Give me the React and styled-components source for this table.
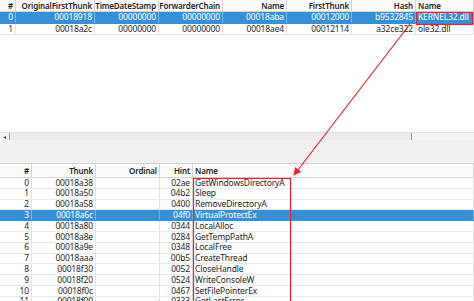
import React from 'react';
import styled, { createGlobalStyle } from 'styled-components';

const GlobalStyle = createGlobalStyle`
  html, body {
    margin: 0;
    padding: 0;
    background: #ffffff;
  }
  body {
    font-family: 'Noto Sans', 'Open Sans', sans-serif;
  }
`;

const SELECT_BLUE = '#3790d6';
const ANNOT_RED = '#e3232f';

const Frame = styled.div`
  position: relative;
  width: 474px;
  height: 301px;
  overflow: hidden;
  background: #ffffff;
  display: flex;
  flex-direction: column;
  font-size: 8.5px;
  letter-spacing: -0.15px;
  color: #262626;
`;

const TopPane = styled.div`
  height: 132px;
  background: #ffffff;
  display: flex;
  flex-direction: column;
`;

const Row = styled.div`
  display: grid;
  grid-template-columns: ${(p) => p.cols};
  height: ${(p) => p.h}px;
  flex: 0 0 auto;
  background: ${(p) => (p.selected ? SELECT_BLUE : '#ffffff')};
  color: ${(p) => (p.selected ? '#ffffff' : '#262626')};
  border-bottom: 1px solid ${(p) => (p.selected ? SELECT_BLUE : '#e9e9e9')};
  box-sizing: border-box;
`;

const HeadRow = styled(Row)`
  background: #fbfbfb;
  color: #1e1e1e;
  font-size: 8px;
  font-weight: 600;
  border-bottom: 1px solid #d6d6d6;
`;

const Cell = styled.div`
  display: flex;
  align-items: center;
  justify-content: ${(p) => (p.left ? 'flex-start' : 'flex-end')};
  padding: 0 2px;
  white-space: nowrap;
  overflow: hidden;
  border-right: 1px solid ${(p) => (p.selected ? 'rgba(255,255,255,0.35)' : '#e2e2e2')};
  box-sizing: border-box;
  line-height: 1;
`;

const HeadCell = styled(Cell)`
  border-right: 1px solid #d2d2d2;
`;

const HScroll = styled.div`
  height: 8px;
  display: flex;
  background: #f4f4f4;
  border-top: 1px solid #e2e2e2;
  box-sizing: border-box;
`;

const ScrollArrow = styled.div`
  width: 9px;
  display: flex;
  align-items: center;
  justify-content: center;
  font-size: 6px;
  color: #444;
`;

const ScrollThumb = styled.div`
  width: 403px;
  background: #ececec;
  border-left: 1px solid #9a9a9a;
  border-right: 1px solid #9a9a9a;
  box-sizing: border-box;
`;

const Splitter = styled.div`
  height: 24px;
  background: #f0f0f0;
  border-bottom: 1px solid #cfcfcf;
  box-sizing: border-box;
`;

const BottomPane = styled.div`
  flex: 1;
  display: flex;
  flex-direction: column;
  overflow: hidden;
`;

const Overlay = styled.svg`
  position: absolute;
  left: 0;
  top: 0;
  pointer-events: none;
`;

const topCols = '16px 79px 64px 64px 64px 65px 64px 58px';
const topHead = ['#', 'OriginalFirstThunk', 'TimeDateStamp', 'ForwarderChain', 'Name', 'FirstThunk', 'Hash', 'Name'];
const topRows = [
  ['0', '00018918', '00000000', '00000000', '00018aba', '00012000', 'b9532845', 'KERNEL32.dll'],
  ['1', '00018a2c', '00000000', '00000000', '00018ae4', '00012114', 'a32ce322', 'ole32.dll'],
];

const botCols = '32px 64px 64px 33px 1fr';
const botHead = ['#', 'Thunk', 'Ordinal', 'Hint', 'Name'];
const botRows = [
  ['0', '00018a38', '', '02ae', 'GetWindowsDirectoryA'],
  ['1', '00018a50', '', '04b2', 'Sleep'],
  ['2', '00018a58', '', '0400', 'RemoveDirectoryA'],
  ['3', '00018a6c', '', '04f0', 'VirtualProtectEx'],
  ['4', '00018a80', '', '0344', 'LocalAlloc'],
  ['5', '00018a8e', '', '0284', 'GetTempPathA'],
  ['6', '00018a9e', '', '0348', 'LocalFree'],
  ['7', '00018aaa', '', '00b5', 'CreateThread'],
  ['8', '00018f30', '', '0052', 'CloseHandle'],
  ['9', '00018f20', '', '0524', 'WriteConsoleW'],
  ['10', '00018f0c', '', '0467', 'SetFilePointerEx'],
  ['11', '00018f00', '', '0333', 'GetLastError'],
];

function Table({ cols, head, rows, headH, rowH, selected }) {
  const last = head.length - 1;
  return (
    <>
      <HeadRow cols={cols} h={headH}>
        {head.map((h, i) => (
          <HeadCell key={i} left={i === last}>
            {h}
          </HeadCell>
        ))}
      </HeadRow>
      {rows.map((r, ri) => (
        <Row key={ri} cols={cols} h={rowH} selected={ri === selected}>
          {r.map((c, ci) => (
            <Cell key={ci} left={ci === last} selected={ri === selected}>
              {c}
            </Cell>
          ))}
        </Row>
      ))}
    </>
  );
}

export default function App() {
  return (
    <>
      <GlobalStyle />
      <Frame>
        <TopPane>
          <Table cols={topCols} head={topHead} rows={topRows} headH={12} rowH={11.5} selected={0} />
        </TopPane>
        <HScroll>
          <ScrollArrow>◂</ScrollArrow>
          <ScrollThumb />
        </HScroll>
        <Splitter />
        <BottomPane>
          <Table cols={botCols} head={botHead} rows={botRows} headH={14} rowH={10.8} selected={3} />
        </BottomPane>
        <Overlay width="474" height="301" viewBox="0 0 474 301">
          <defs>
            <marker id="head" markerWidth="8" markerHeight="8" refX="7" refY="4" orient="auto" markerUnits="userSpaceOnUse">
              <path d="M0,0 L8,4 L0,8 z" fill={ANNOT_RED} />
            </marker>
          </defs>
          <rect x="416.5" y="12.5" width="56" height="12" fill="none" stroke={ANNOT_RED} strokeWidth="1.2" />
          <rect x="193.5" y="178.5" width="97" height="140" fill="none" stroke={ANNOT_RED} strokeWidth="1.2" />
          <line x1="410" y1="24" x2="294" y2="175" stroke={ANNOT_RED} strokeWidth="1.2" markerEnd="url(#head)" />
        </Overlay>
      </Frame>
    </>
  );
}
